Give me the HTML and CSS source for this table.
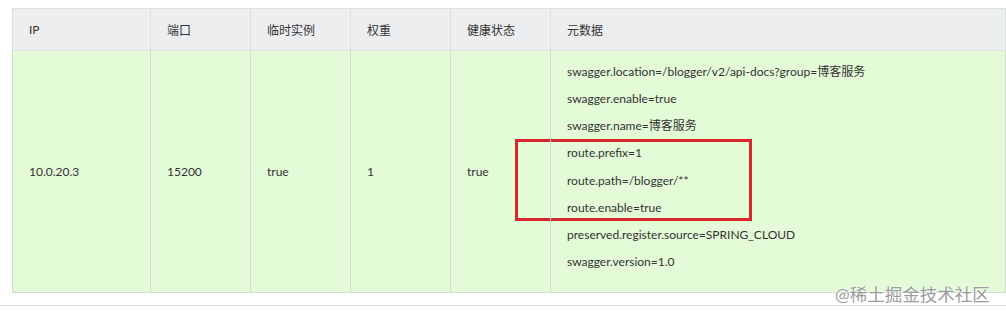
FILE: index.html
```html
<!DOCTYPE html>
<html lang="zh-CN">
<head>
<meta charset="utf-8">
<title>实例列表</title>
<link rel="stylesheet" href="styles.css">
</head>
<body>
<div class="page">
  <table class="grid">
    <colgroup>
      <col class="c-ip"><col class="c-port"><col class="c-eph"><col class="c-weight"><col class="c-health"><col class="c-meta">
    </colgroup>
    <thead>
      <tr>
        <th>IP</th>
        <th>端口</th>
        <th>临时实例</th>
        <th>权重</th>
        <th>健康状态</th>
        <th>元数据</th>
      </tr>
    </thead>
    <tbody>
      <tr>
        <td>10.0.20.3</td>
        <td>15200</td>
        <td>true</td>
        <td>1</td>
        <td>true</td>
        <td class="meta">
          <div class="line">swagger.location=/blogger/v2/api-docs?group=博客服务</div>
          <div class="line">swagger.enable=true</div>
          <div class="line">swagger.name=博客服务</div>
          <div class="highlight">
            <div class="line">route.prefix=1</div>
            <div class="line">route.path=/blogger/**</div>
            <div class="line">route.enable=true</div>
          </div>
          <div class="line">preserved.register.source=SPRING_CLOUD</div>
          <div class="line">swagger.version=1.0</div>
        </td>
      </tr>
    </tbody>
  </table>
  <div class="rule"></div>
  <div class="watermark">@稀土掘金技术社区</div>
</div>
</body>
</html>
```
FILE: styles.css
```css
html, body {
  margin: 0;
  padding: 0;
  background: #ffffff;
}
body {
  width: 1006px;
  height: 314px;
  overflow: hidden;
  font-family: "Lato", "Noto Sans CJK SC", sans-serif;
  font-size: 12px;
  color: #333333;
}
.page {
  position: relative;
  padding-top: 8px;
  padding-left: 12px;
}
.grid {
  border-collapse: collapse;
  table-layout: fixed;
  width: 993px;
}
.c-ip { width: 138px; }
.c-port { width: 100px; }
.c-eph { width: 100px; }
.c-weight { width: 100px; }
.c-health { width: 100px; }
.c-meta { width: 455px; }
.grid th {
  height: 41px;
  padding: 0 0 0 16px;
  background: #eceef0;
  border: 1px solid #dcdfe2;
  text-align: left;
  font-weight: normal;
  vertical-align: middle;
}
.grid td {
  background: #e3fbd7;
  border: 1px solid #d4dcd2;
  padding: 0 0 0 16px;
  vertical-align: middle;
}
.grid td.meta {
  padding-top: 7px;
  padding-bottom: 17px;
}
.line {
  line-height: 27.125px;
  white-space: nowrap;
}
.highlight {
  box-sizing: border-box;
  margin-left: -52px;
  padding-left: 52px;
  width: 237px;
  box-shadow: inset 0 0 0 3px #d8262c;
}
.rule {
  margin-top: 12px;
  margin-left: -12px;
  height: 1px;
  background: #dedede;
}
.watermark {
  position: absolute;
  left: 835px;
  top: 281px;
  font-size: 17.5px;
  color: #9c9c9c;
  text-shadow: 0 0 2px #ffffff, 0 0 1px #ffffff;
  white-space: nowrap;
}
```
